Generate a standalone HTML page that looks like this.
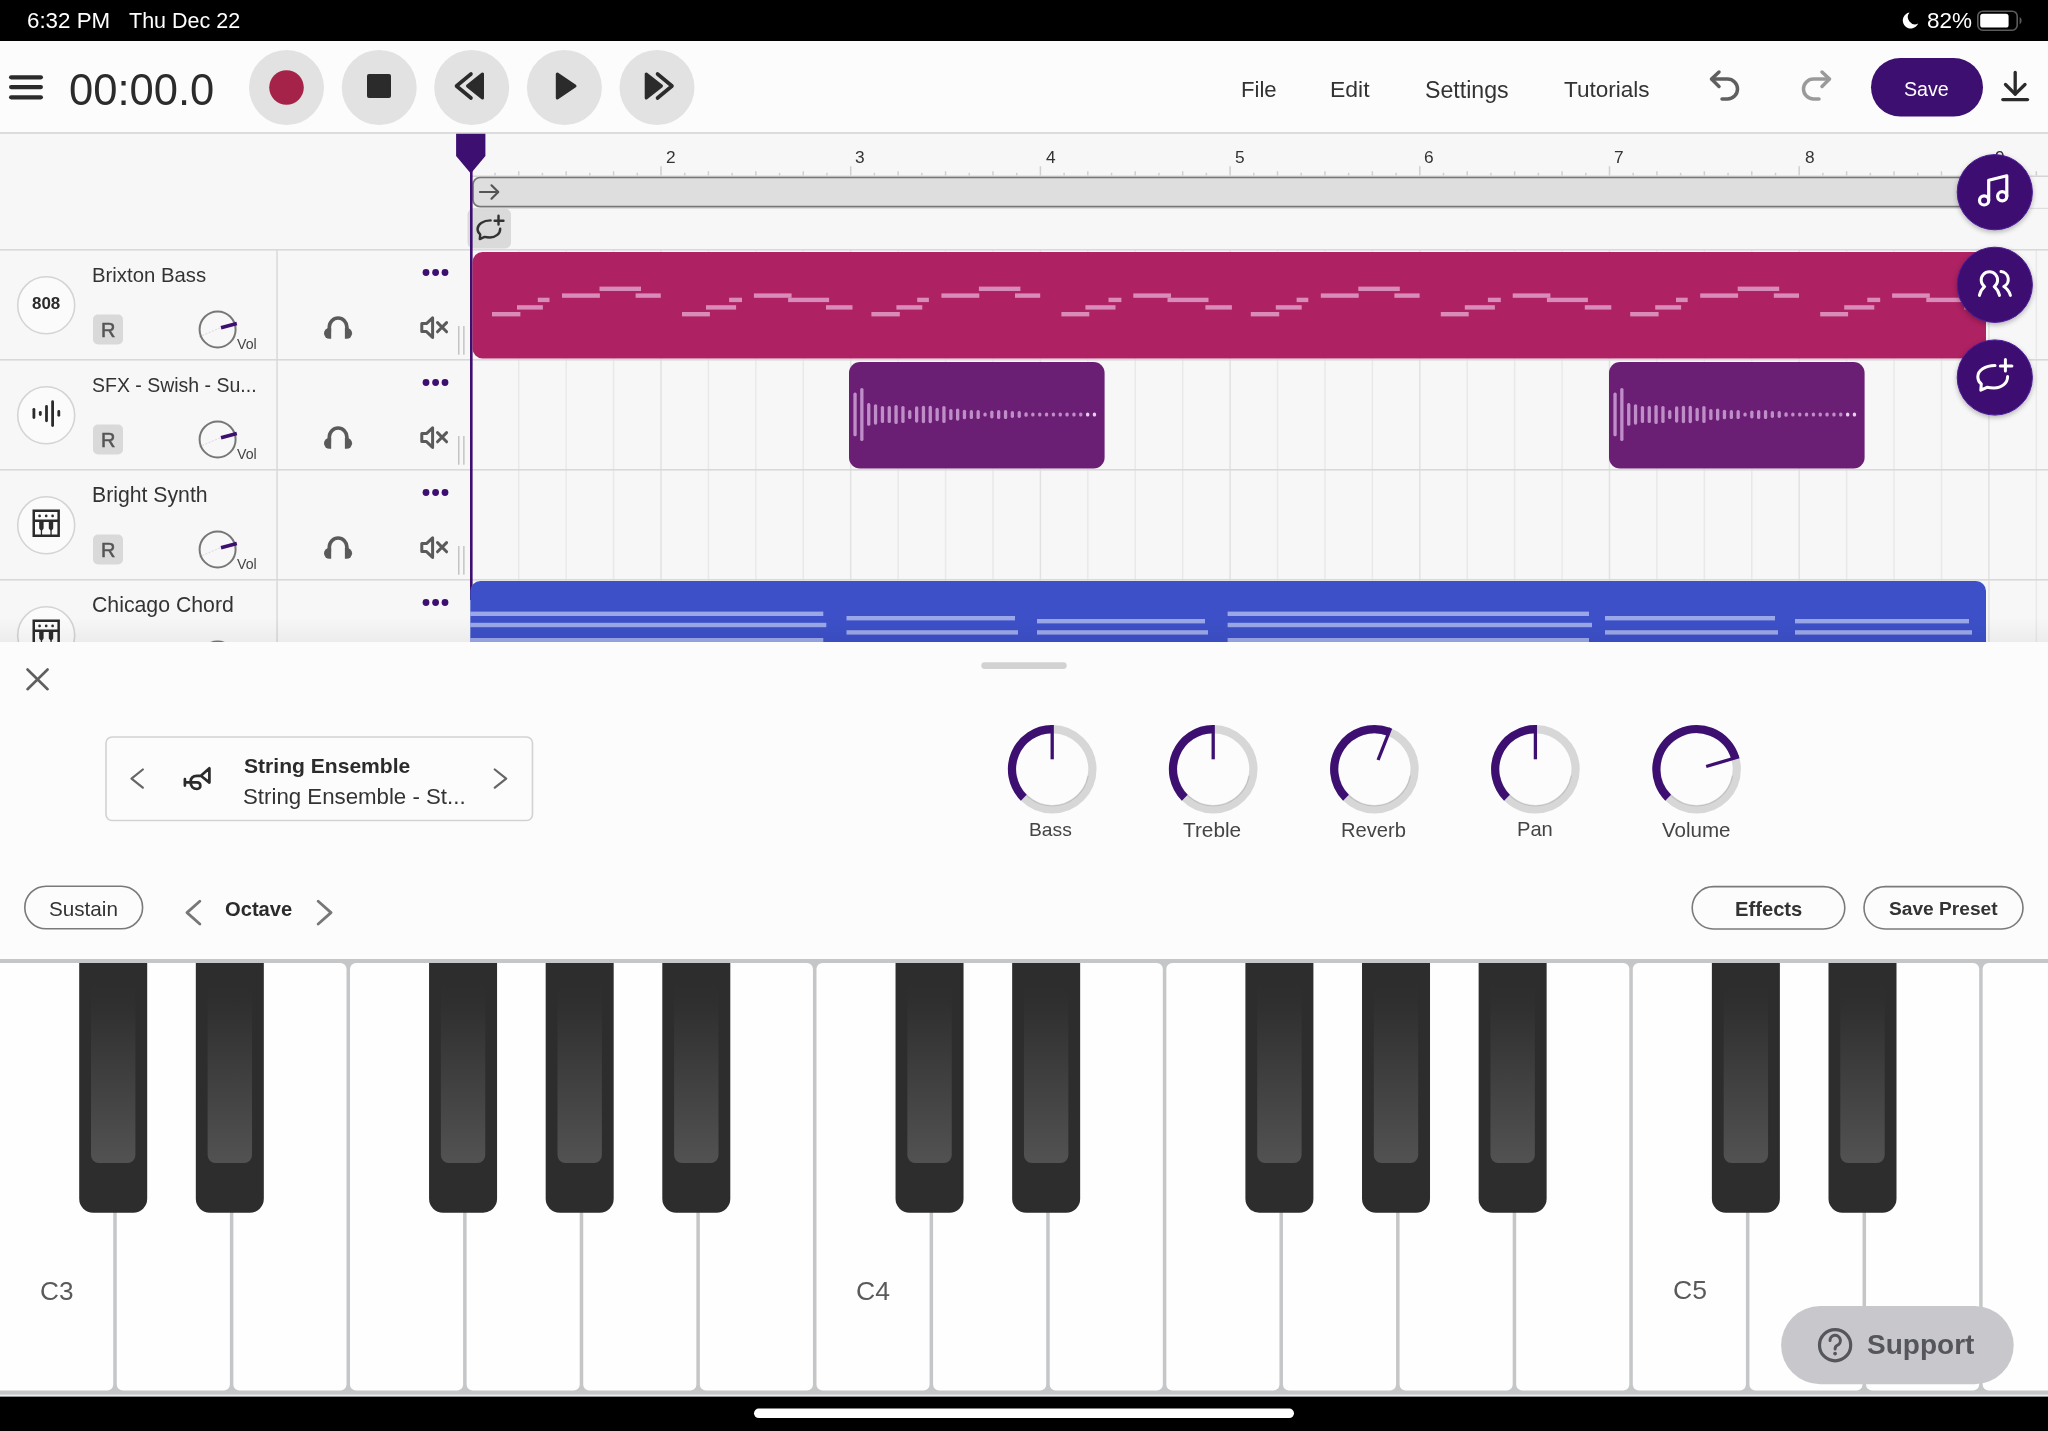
<!DOCTYPE html>
<html><head><meta charset="utf-8"><title>DAW</title>
<style>
html,body{margin:0;padding:0;}
body{width:2048px;height:1431px;overflow:hidden;position:relative;background:#fcfcfc;font-family:"Liberation Sans", sans-serif;}
.a{position:absolute;}
.t{position:absolute;line-height:1;white-space:nowrap;font-family:"Liberation Sans", sans-serif;will-change:transform;}
svg{position:absolute;left:0;top:0;overflow:visible;}
</style></head><body>

<div class="a" style="left:0;top:0;width:2048px;height:41px;background:#000"></div>
<div class="a" style="left:0;top:41px;width:2048px;height:91px;background:#fcfcfc"></div>
<div class="a" style="left:0;top:132px;width:2048px;height:2px;background:#dcdcdc"></div>
<div class="a" style="left:0;top:134px;width:2048px;height:508px;background:#f7f7f7"></div>
<div id="st_time" class="t" style="left:26.89px;top:9.69px;font-size:22.33px;color:#fff;font-weight:400;">6:32 PM</div>
<div id="st_date" class="t" style="left:128.92px;top:10.78px;font-size:21.50px;color:#fff;font-weight:400;">Thu Dec 22</div>
<div id="st_batt" class="t" style="left:1926.89px;top:9.67px;font-size:22.51px;color:#fff;font-weight:400;">82%</div>
<svg width="2048" height="41" viewBox="0 0 2048 41">
<path d="M1909.5 12.6 A8 8 0 1 0 1918.2 23.6 A7.2 7.2 0 0 1 1909.5 12.6 Z" fill="#fff"/>
<rect x="1977.8" y="11.2" width="39.4" height="19" rx="5" fill="none" stroke="#5c5c5c" stroke-width="1.6"/>
<rect x="1980.2" y="13.8" width="28.4" height="13.7" rx="2.6" fill="#fff"/>
<path d="M2019.6 17 a3 3.8 0 0 1 0 7.2 z" fill="#5c5c5c"/>
</svg>
<svg width="2048" height="140" viewBox="0 0 2048 140">
<g fill="#2b2b2b">
<rect x="9" y="75.2" width="34" height="4.2" rx="2.1"/>
<rect x="9" y="85" width="34" height="4.2" rx="2.1"/>
<rect x="9" y="95.2" width="34" height="4.2" rx="2.1"/>
</g>
<g fill="#e2e2e2">
<circle cx="286.5" cy="87.5" r="37.5"/>
<circle cx="379.2" cy="87.5" r="37.5"/>
<circle cx="471.7" cy="87.5" r="37.5"/>
<circle cx="564.4" cy="87.5" r="37.5"/>
<circle cx="657" cy="87.5" r="37.5"/>
</g>
<circle cx="286.5" cy="87.5" r="17.3" fill="#a52249"/>
<rect x="367" y="74" width="24" height="24" rx="2" fill="#2b2b2b"/>
<g fill="#2b2b2b" stroke="#2b2b2b" stroke-linejoin="round" stroke-linecap="round">
<path d="M471 74 L456.5 86 L471 98" fill="none" stroke-width="3.6"/>
<path d="M482.5 74 L482.5 98 L467.5 86 Z" stroke-width="3"/>
<path d="M557.3 74 L557.3 98 L575 86 Z" stroke-width="3"/>
<path d="M646.2 74 L646.2 98 L661.5 86 Z" stroke-width="3"/>
<path d="M657.5 74 L672 86 L657.5 98" fill="none" stroke-width="3.6"/>
</g>
<g fill="none" stroke-linecap="round" stroke-linejoin="round" stroke-width="3.5">
<path d="M1712 79 H1727.5 A10 10 0 0 1 1727.5 99 H1722" stroke="#5f5f5f"/>
<path d="M1719 72 L1711.5 79 L1719 86.5" stroke="#5f5f5f"/>
<path d="M1829 79 H1813.5 A10 10 0 0 0 1813.5 99 H1819" stroke="#9a9a9a"/>
<path d="M1822 72 L1829.5 79 L1822 86.5" stroke="#9a9a9a"/>
</g>
<rect x="1871" y="58" width="112" height="58.6" rx="29.3" fill="#3c0f71"/>
<g stroke="#2b2b2b" stroke-width="3.3" stroke-linecap="round" stroke-linejoin="round" fill="none">
<path d="M2015.2 72.5 V94"/>
<path d="M2005.5 84.5 L2015.2 94.2 L2025 84.5"/>
<path d="M2002.8 99.6 H2027.5"/>
</g>
</svg>
<div id="timer" class="t" style="left:68.77px;top:69.42px;font-size:43.54px;color:#2b2b2b;font-weight:400;">00:00.0</div>
<div id="m_file" class="t" style="left:1240.86px;top:78.74px;font-size:22.15px;color:#333;font-weight:400;">File</div>
<div id="m_edit" class="t" style="left:1329.83px;top:77.89px;font-size:22.94px;color:#333;font-weight:400;">Edit</div>
<div id="m_settings" class="t" style="left:1424.85px;top:78.53px;font-size:23.16px;color:#333;font-weight:400;">Settings</div>
<div id="m_tut" class="t" style="left:1563.88px;top:78.65px;font-size:22.53px;color:#333;font-weight:400;">Tutorials</div>
<div id="b_save" class="t" style="left:1903.99px;top:80.03px;font-size:19.66px;color:#fff;font-weight:400;">Save</div>
<svg width="2048" height="660" viewBox="0 0 2048 660">
<rect x="517.98" y="250" width="1.5" height="392" fill="#e9e9e9"/>
<rect x="565.40" y="250" width="1.5" height="392" fill="#e9e9e9"/>
<rect x="612.83" y="250" width="1.5" height="392" fill="#e9e9e9"/>
<rect x="660.25" y="250" width="1.5" height="392" fill="#e2e2e2"/>
<rect x="707.67" y="250" width="1.5" height="392" fill="#e9e9e9"/>
<rect x="755.10" y="250" width="1.5" height="392" fill="#e9e9e9"/>
<rect x="802.52" y="250" width="1.5" height="392" fill="#e9e9e9"/>
<rect x="849.95" y="250" width="1.5" height="392" fill="#e2e2e2"/>
<rect x="897.38" y="250" width="1.5" height="392" fill="#e9e9e9"/>
<rect x="944.80" y="250" width="1.5" height="392" fill="#e9e9e9"/>
<rect x="992.22" y="250" width="1.5" height="392" fill="#e9e9e9"/>
<rect x="1039.65" y="250" width="1.5" height="392" fill="#e2e2e2"/>
<rect x="1087.08" y="250" width="1.5" height="392" fill="#e9e9e9"/>
<rect x="1134.50" y="250" width="1.5" height="392" fill="#e9e9e9"/>
<rect x="1181.92" y="250" width="1.5" height="392" fill="#e9e9e9"/>
<rect x="1229.35" y="250" width="1.5" height="392" fill="#e2e2e2"/>
<rect x="1276.77" y="250" width="1.5" height="392" fill="#e9e9e9"/>
<rect x="1324.20" y="250" width="1.5" height="392" fill="#e9e9e9"/>
<rect x="1371.62" y="250" width="1.5" height="392" fill="#e9e9e9"/>
<rect x="1419.05" y="250" width="1.5" height="392" fill="#e2e2e2"/>
<rect x="1466.47" y="250" width="1.5" height="392" fill="#e9e9e9"/>
<rect x="1513.90" y="250" width="1.5" height="392" fill="#e9e9e9"/>
<rect x="1561.32" y="250" width="1.5" height="392" fill="#e9e9e9"/>
<rect x="1608.75" y="250" width="1.5" height="392" fill="#e2e2e2"/>
<rect x="1656.17" y="250" width="1.5" height="392" fill="#e9e9e9"/>
<rect x="1703.60" y="250" width="1.5" height="392" fill="#e9e9e9"/>
<rect x="1751.02" y="250" width="1.5" height="392" fill="#e9e9e9"/>
<rect x="1798.45" y="250" width="1.5" height="392" fill="#e2e2e2"/>
<rect x="1845.87" y="250" width="1.5" height="392" fill="#e9e9e9"/>
<rect x="1893.30" y="250" width="1.5" height="392" fill="#e9e9e9"/>
<rect x="1940.72" y="250" width="1.5" height="392" fill="#e9e9e9"/>
<rect x="1988.15" y="250" width="1.5" height="392" fill="#e2e2e2"/>
<rect x="2035.57" y="250" width="1.5" height="392" fill="#e9e9e9"/>
<rect x="494.26" y="172.8" width="1.5" height="2.7" fill="#d0d0d0"/>
<rect x="517.98" y="171.2" width="1.5" height="4.3" fill="#d0d0d0"/>
<rect x="541.69" y="172.8" width="1.5" height="2.7" fill="#d0d0d0"/>
<rect x="565.40" y="171.2" width="1.5" height="4.3" fill="#d0d0d0"/>
<rect x="589.11" y="172.8" width="1.5" height="2.7" fill="#d0d0d0"/>
<rect x="612.83" y="171.2" width="1.5" height="4.3" fill="#d0d0d0"/>
<rect x="636.54" y="172.8" width="1.5" height="2.7" fill="#d0d0d0"/>
<rect x="660.25" y="166.2" width="1.5" height="9.3" fill="#d0d0d0"/>
<rect x="683.96" y="172.8" width="1.5" height="2.7" fill="#d0d0d0"/>
<rect x="707.67" y="171.2" width="1.5" height="4.3" fill="#d0d0d0"/>
<rect x="731.39" y="172.8" width="1.5" height="2.7" fill="#d0d0d0"/>
<rect x="755.10" y="171.2" width="1.5" height="4.3" fill="#d0d0d0"/>
<rect x="778.81" y="172.8" width="1.5" height="2.7" fill="#d0d0d0"/>
<rect x="802.52" y="171.2" width="1.5" height="4.3" fill="#d0d0d0"/>
<rect x="826.24" y="172.8" width="1.5" height="2.7" fill="#d0d0d0"/>
<rect x="849.95" y="166.2" width="1.5" height="9.3" fill="#d0d0d0"/>
<rect x="873.66" y="172.8" width="1.5" height="2.7" fill="#d0d0d0"/>
<rect x="897.38" y="171.2" width="1.5" height="4.3" fill="#d0d0d0"/>
<rect x="921.09" y="172.8" width="1.5" height="2.7" fill="#d0d0d0"/>
<rect x="944.80" y="171.2" width="1.5" height="4.3" fill="#d0d0d0"/>
<rect x="968.51" y="172.8" width="1.5" height="2.7" fill="#d0d0d0"/>
<rect x="992.22" y="171.2" width="1.5" height="4.3" fill="#d0d0d0"/>
<rect x="1015.94" y="172.8" width="1.5" height="2.7" fill="#d0d0d0"/>
<rect x="1039.65" y="166.2" width="1.5" height="9.3" fill="#d0d0d0"/>
<rect x="1063.36" y="172.8" width="1.5" height="2.7" fill="#d0d0d0"/>
<rect x="1087.08" y="171.2" width="1.5" height="4.3" fill="#d0d0d0"/>
<rect x="1110.79" y="172.8" width="1.5" height="2.7" fill="#d0d0d0"/>
<rect x="1134.50" y="171.2" width="1.5" height="4.3" fill="#d0d0d0"/>
<rect x="1158.21" y="172.8" width="1.5" height="2.7" fill="#d0d0d0"/>
<rect x="1181.92" y="171.2" width="1.5" height="4.3" fill="#d0d0d0"/>
<rect x="1205.64" y="172.8" width="1.5" height="2.7" fill="#d0d0d0"/>
<rect x="1229.35" y="166.2" width="1.5" height="9.3" fill="#d0d0d0"/>
<rect x="1253.06" y="172.8" width="1.5" height="2.7" fill="#d0d0d0"/>
<rect x="1276.77" y="171.2" width="1.5" height="4.3" fill="#d0d0d0"/>
<rect x="1300.49" y="172.8" width="1.5" height="2.7" fill="#d0d0d0"/>
<rect x="1324.20" y="171.2" width="1.5" height="4.3" fill="#d0d0d0"/>
<rect x="1347.91" y="172.8" width="1.5" height="2.7" fill="#d0d0d0"/>
<rect x="1371.62" y="171.2" width="1.5" height="4.3" fill="#d0d0d0"/>
<rect x="1395.34" y="172.8" width="1.5" height="2.7" fill="#d0d0d0"/>
<rect x="1419.05" y="166.2" width="1.5" height="9.3" fill="#d0d0d0"/>
<rect x="1442.76" y="172.8" width="1.5" height="2.7" fill="#d0d0d0"/>
<rect x="1466.47" y="171.2" width="1.5" height="4.3" fill="#d0d0d0"/>
<rect x="1490.19" y="172.8" width="1.5" height="2.7" fill="#d0d0d0"/>
<rect x="1513.90" y="171.2" width="1.5" height="4.3" fill="#d0d0d0"/>
<rect x="1537.61" y="172.8" width="1.5" height="2.7" fill="#d0d0d0"/>
<rect x="1561.32" y="171.2" width="1.5" height="4.3" fill="#d0d0d0"/>
<rect x="1585.04" y="172.8" width="1.5" height="2.7" fill="#d0d0d0"/>
<rect x="1608.75" y="166.2" width="1.5" height="9.3" fill="#d0d0d0"/>
<rect x="1632.46" y="172.8" width="1.5" height="2.7" fill="#d0d0d0"/>
<rect x="1656.17" y="171.2" width="1.5" height="4.3" fill="#d0d0d0"/>
<rect x="1679.89" y="172.8" width="1.5" height="2.7" fill="#d0d0d0"/>
<rect x="1703.60" y="171.2" width="1.5" height="4.3" fill="#d0d0d0"/>
<rect x="1727.31" y="172.8" width="1.5" height="2.7" fill="#d0d0d0"/>
<rect x="1751.02" y="171.2" width="1.5" height="4.3" fill="#d0d0d0"/>
<rect x="1774.74" y="172.8" width="1.5" height="2.7" fill="#d0d0d0"/>
<rect x="1798.45" y="166.2" width="1.5" height="9.3" fill="#d0d0d0"/>
<rect x="1822.16" y="172.8" width="1.5" height="2.7" fill="#d0d0d0"/>
<rect x="1845.87" y="171.2" width="1.5" height="4.3" fill="#d0d0d0"/>
<rect x="1869.59" y="172.8" width="1.5" height="2.7" fill="#d0d0d0"/>
<rect x="1893.30" y="171.2" width="1.5" height="4.3" fill="#d0d0d0"/>
<rect x="1917.01" y="172.8" width="1.5" height="2.7" fill="#d0d0d0"/>
<rect x="1940.72" y="171.2" width="1.5" height="4.3" fill="#d0d0d0"/>
<rect x="1964.44" y="172.8" width="1.5" height="2.7" fill="#d0d0d0"/>
<rect x="1988.15" y="166.2" width="1.5" height="9.3" fill="#d0d0d0"/>
<rect x="2011.86" y="172.8" width="1.5" height="2.7" fill="#d0d0d0"/>
<rect x="2035.57" y="171.2" width="1.5" height="4.3" fill="#d0d0d0"/>
<rect x="0" y="249" width="2048" height="1.6" fill="#dadada"/>
<rect x="0" y="359" width="2048" height="1.6" fill="#d9d9d9"/>
<rect x="0" y="469" width="2048" height="1.6" fill="#d9d9d9"/>
<rect x="0" y="579" width="2048" height="1.6" fill="#d9d9d9"/>
<rect x="276.3" y="250" width="1.5" height="392" fill="#d9d9d9"/>
<rect x="472" y="175.6" width="1576" height="1.2" fill="#cdcdcd"/>
<rect x="472" y="207.8" width="1576" height="1.2" fill="#dedede"/>
<path d="M480 177.5 H1995 V206.7 H480 A7 7 0 0 1 473 199.7 V184.5 A7 7 0 0 1 480 177.5 Z" fill="#dedede" stroke="#777" stroke-width="1.7"/>
<path d="M480 192 H498 M491.5 185.3 L498.3 192 L491.5 198.7" fill="none" stroke="#555" stroke-width="2.2" stroke-linecap="round" stroke-linejoin="round"/>
<rect x="467.5" y="208.6" width="43.5" height="39.8" rx="6" fill="#dadada"/>
<g transform="translate(490.5 227.4) scale(0.76) translate(-1994.85 -374.8)"><path d="M1995 365.6 C1985 365.6 1977.8 370.5 1977.8 377 C1977.8 380 1979.3 382.4 1981.3 384 L1980.8 390.2 L1987 387.3 C1989 387.8 1991.5 388 1994 388 C2002 388 2007.6 383 2007.6 376.5 M2000.3 366.1 H2011.9 M2005.4 359.4 V371" fill="none" stroke="#333" stroke-width="3.2" stroke-linecap="round" stroke-linejoin="round"/></g>
<rect x="470" y="160" width="2.6" height="440" fill="#3c0f71"/>
<path d="M482.5 252 H1986 V358.5 H482.5 A10 10 0 0 1 472.5 348.5 V262 A10 10 0 0 1 482.5 252 Z" fill="#ae2163"/>
<rect x="492.0" y="312.0" width="28.4" height="4.4" fill="#d98cba"/>
<rect x="517.0" y="305.2" width="25.9" height="4.4" fill="#d98cba"/>
<rect x="537.8" y="297.7" width="11.7" height="4.4" fill="#d98cba"/>
<rect x="562.0" y="293.4" width="37.9" height="4.4" fill="#d98cba"/>
<rect x="599.5" y="286.6" width="41.5" height="4.4" fill="#d98cba"/>
<rect x="635.6" y="293.4" width="25.2" height="4.4" fill="#d98cba"/>
<rect x="682.0" y="312.0" width="27.9" height="4.4" fill="#d98cba"/>
<rect x="706.0" y="305.2" width="30.1" height="4.4" fill="#d98cba"/>
<rect x="729.1" y="297.7" width="12.9" height="4.4" fill="#d98cba"/>
<rect x="753.9" y="293.4" width="37.7" height="4.4" fill="#d98cba"/>
<rect x="788.1" y="297.7" width="41.0" height="4.4" fill="#d98cba"/>
<rect x="826.0" y="305.2" width="26.5" height="4.4" fill="#d98cba"/>
<rect x="871.4" y="312.0" width="28.4" height="4.4" fill="#d98cba"/>
<rect x="896.4" y="305.2" width="25.9" height="4.4" fill="#d98cba"/>
<rect x="917.2" y="297.7" width="11.7" height="4.4" fill="#d98cba"/>
<rect x="941.4" y="293.4" width="37.9" height="4.4" fill="#d98cba"/>
<rect x="978.9" y="286.6" width="41.5" height="4.4" fill="#d98cba"/>
<rect x="1015.0" y="293.4" width="25.2" height="4.4" fill="#d98cba"/>
<rect x="1061.4" y="312.0" width="27.9" height="4.4" fill="#d98cba"/>
<rect x="1085.4" y="305.2" width="30.1" height="4.4" fill="#d98cba"/>
<rect x="1108.5" y="297.7" width="12.9" height="4.4" fill="#d98cba"/>
<rect x="1133.3" y="293.4" width="37.7" height="4.4" fill="#d98cba"/>
<rect x="1167.5" y="297.7" width="41.0" height="4.4" fill="#d98cba"/>
<rect x="1205.4" y="305.2" width="26.5" height="4.4" fill="#d98cba"/>
<rect x="1250.8" y="312.0" width="28.4" height="4.4" fill="#d98cba"/>
<rect x="1275.8" y="305.2" width="25.9" height="4.4" fill="#d98cba"/>
<rect x="1296.6" y="297.7" width="11.7" height="4.4" fill="#d98cba"/>
<rect x="1320.8" y="293.4" width="37.9" height="4.4" fill="#d98cba"/>
<rect x="1358.3" y="286.6" width="41.5" height="4.4" fill="#d98cba"/>
<rect x="1394.4" y="293.4" width="25.2" height="4.4" fill="#d98cba"/>
<rect x="1440.8" y="312.0" width="27.9" height="4.4" fill="#d98cba"/>
<rect x="1464.8" y="305.2" width="30.1" height="4.4" fill="#d98cba"/>
<rect x="1487.9" y="297.7" width="12.9" height="4.4" fill="#d98cba"/>
<rect x="1512.7" y="293.4" width="37.7" height="4.4" fill="#d98cba"/>
<rect x="1546.9" y="297.7" width="41.0" height="4.4" fill="#d98cba"/>
<rect x="1584.8" y="305.2" width="26.5" height="4.4" fill="#d98cba"/>
<rect x="1630.2" y="312.0" width="28.4" height="4.4" fill="#d98cba"/>
<rect x="1655.2" y="305.2" width="25.9" height="4.4" fill="#d98cba"/>
<rect x="1676.0" y="297.7" width="11.7" height="4.4" fill="#d98cba"/>
<rect x="1700.2" y="293.4" width="37.9" height="4.4" fill="#d98cba"/>
<rect x="1737.7" y="286.6" width="41.5" height="4.4" fill="#d98cba"/>
<rect x="1773.8" y="293.4" width="25.2" height="4.4" fill="#d98cba"/>
<rect x="1820.2" y="312.0" width="27.9" height="4.4" fill="#d98cba"/>
<rect x="1844.2" y="305.2" width="30.1" height="4.4" fill="#d98cba"/>
<rect x="1867.3" y="297.7" width="12.9" height="4.4" fill="#d98cba"/>
<rect x="1892.1" y="293.4" width="37.7" height="4.4" fill="#d98cba"/>
<rect x="1926.3" y="297.7" width="41.0" height="4.4" fill="#d98cba"/>
<rect x="1964.2" y="305.2" width="21.8" height="4.4" fill="#d98cba"/>
<rect x="849.0" y="362" width="255.6" height="106.5" rx="11" fill="#6b1f74"/>
<rect x="853.4" y="392.6" width="3.3" height="43.7" rx="1.6" fill="#bf8ec8"/>
<rect x="860.2" y="388.0" width="3.3" height="53.0" rx="1.6" fill="#bf8ec8"/>
<rect x="867.1" y="403.1" width="3.3" height="22.7" rx="1.6" fill="#bf8ec8"/>
<rect x="873.9" y="404.2" width="3.3" height="20.5" rx="1.6" fill="#bf8ec8"/>
<rect x="880.8" y="406.0" width="3.3" height="17.0" rx="1.6" fill="#bf8ec8"/>
<rect x="887.6" y="406.0" width="3.3" height="17.0" rx="1.6" fill="#bf8ec8"/>
<rect x="894.4" y="405.0" width="3.3" height="19.0" rx="1.6" fill="#bf8ec8"/>
<rect x="901.3" y="406.0" width="3.3" height="17.0" rx="1.6" fill="#bf8ec8"/>
<rect x="908.1" y="410.1" width="3.3" height="8.9" rx="1.6" fill="#bf8ec8"/>
<rect x="915.0" y="406.3" width="3.3" height="16.4" rx="1.6" fill="#bf8ec8"/>
<rect x="921.8" y="405.8" width="3.3" height="17.4" rx="1.6" fill="#bf8ec8"/>
<rect x="928.6" y="405.8" width="3.3" height="17.4" rx="1.6" fill="#bf8ec8"/>
<rect x="935.5" y="407.8" width="3.3" height="13.4" rx="1.6" fill="#bf8ec8"/>
<rect x="942.3" y="406.0" width="3.3" height="17.0" rx="1.6" fill="#bf8ec8"/>
<rect x="949.2" y="409.0" width="3.3" height="11.0" rx="1.6" fill="#bf8ec8"/>
<rect x="956.0" y="408.4" width="3.3" height="12.3" rx="1.6" fill="#bf8ec8"/>
<rect x="962.8" y="409.7" width="3.3" height="9.6" rx="1.6" fill="#bf8ec8"/>
<rect x="969.7" y="410.1" width="3.3" height="8.9" rx="1.6" fill="#bf8ec8"/>
<rect x="976.5" y="410.1" width="3.3" height="8.9" rx="1.6" fill="#bf8ec8"/>
<rect x="983.4" y="412.5" width="3.3" height="4.0" rx="1.6" fill="#bf8ec8"/>
<rect x="990.2" y="410.6" width="3.3" height="7.8" rx="1.6" fill="#bf8ec8"/>
<rect x="997.0" y="410.1" width="3.3" height="8.9" rx="1.6" fill="#bf8ec8"/>
<rect x="1003.9" y="410.1" width="3.3" height="8.9" rx="1.6" fill="#bf8ec8"/>
<rect x="1010.7" y="411.1" width="3.3" height="6.8" rx="1.6" fill="#bf8ec8"/>
<rect x="1017.6" y="411.1" width="3.3" height="6.8" rx="1.6" fill="#bf8ec8"/>
<rect x="1024.4" y="412.2" width="3.3" height="4.6" rx="1.6" fill="#bf8ec8"/>
<rect x="1031.2" y="412.5" width="3.3" height="4.0" rx="1.6" fill="#bf8ec8"/>
<rect x="1038.1" y="412.5" width="3.3" height="4.0" rx="1.6" fill="#bf8ec8"/>
<rect x="1044.9" y="412.5" width="3.3" height="4.0" rx="1.6" fill="#bf8ec8"/>
<rect x="1051.8" y="412.5" width="3.3" height="4.0" rx="1.6" fill="#bf8ec8"/>
<rect x="1058.6" y="412.5" width="3.3" height="4.0" rx="1.6" fill="#bf8ec8"/>
<rect x="1065.4" y="412.5" width="3.3" height="4.0" rx="1.6" fill="#bf8ec8"/>
<rect x="1072.3" y="412.5" width="3.3" height="4.0" rx="1.6" fill="#bf8ec8"/>
<rect x="1079.1" y="412.5" width="3.3" height="4.0" rx="1.6" fill="#bf8ec8"/>
<rect x="1086.0" y="412.5" width="3.3" height="4.0" rx="1.6" fill="#e6d0ea"/>
<rect x="1092.8" y="412.5" width="3.3" height="4.0" rx="1.6" fill="#e6d0ea"/>
<rect x="1609.0" y="362" width="255.6" height="106.5" rx="11" fill="#6b1f74"/>
<rect x="1613.4" y="392.6" width="3.3" height="43.7" rx="1.6" fill="#bf8ec8"/>
<rect x="1620.2" y="388.0" width="3.3" height="53.0" rx="1.6" fill="#bf8ec8"/>
<rect x="1627.1" y="403.1" width="3.3" height="22.7" rx="1.6" fill="#bf8ec8"/>
<rect x="1633.9" y="404.2" width="3.3" height="20.5" rx="1.6" fill="#bf8ec8"/>
<rect x="1640.8" y="406.0" width="3.3" height="17.0" rx="1.6" fill="#bf8ec8"/>
<rect x="1647.6" y="406.0" width="3.3" height="17.0" rx="1.6" fill="#bf8ec8"/>
<rect x="1654.4" y="405.0" width="3.3" height="19.0" rx="1.6" fill="#bf8ec8"/>
<rect x="1661.3" y="406.0" width="3.3" height="17.0" rx="1.6" fill="#bf8ec8"/>
<rect x="1668.1" y="410.1" width="3.3" height="8.9" rx="1.6" fill="#bf8ec8"/>
<rect x="1675.0" y="406.3" width="3.3" height="16.4" rx="1.6" fill="#bf8ec8"/>
<rect x="1681.8" y="405.8" width="3.3" height="17.4" rx="1.6" fill="#bf8ec8"/>
<rect x="1688.6" y="405.8" width="3.3" height="17.4" rx="1.6" fill="#bf8ec8"/>
<rect x="1695.5" y="407.8" width="3.3" height="13.4" rx="1.6" fill="#bf8ec8"/>
<rect x="1702.3" y="406.0" width="3.3" height="17.0" rx="1.6" fill="#bf8ec8"/>
<rect x="1709.2" y="409.0" width="3.3" height="11.0" rx="1.6" fill="#bf8ec8"/>
<rect x="1716.0" y="408.4" width="3.3" height="12.3" rx="1.6" fill="#bf8ec8"/>
<rect x="1722.8" y="409.7" width="3.3" height="9.6" rx="1.6" fill="#bf8ec8"/>
<rect x="1729.7" y="410.1" width="3.3" height="8.9" rx="1.6" fill="#bf8ec8"/>
<rect x="1736.5" y="410.1" width="3.3" height="8.9" rx="1.6" fill="#bf8ec8"/>
<rect x="1743.4" y="412.5" width="3.3" height="4.0" rx="1.6" fill="#bf8ec8"/>
<rect x="1750.2" y="410.6" width="3.3" height="7.8" rx="1.6" fill="#bf8ec8"/>
<rect x="1757.0" y="410.1" width="3.3" height="8.9" rx="1.6" fill="#bf8ec8"/>
<rect x="1763.9" y="410.1" width="3.3" height="8.9" rx="1.6" fill="#bf8ec8"/>
<rect x="1770.7" y="411.1" width="3.3" height="6.8" rx="1.6" fill="#bf8ec8"/>
<rect x="1777.6" y="411.1" width="3.3" height="6.8" rx="1.6" fill="#bf8ec8"/>
<rect x="1784.4" y="412.2" width="3.3" height="4.6" rx="1.6" fill="#bf8ec8"/>
<rect x="1791.2" y="412.5" width="3.3" height="4.0" rx="1.6" fill="#bf8ec8"/>
<rect x="1798.1" y="412.5" width="3.3" height="4.0" rx="1.6" fill="#bf8ec8"/>
<rect x="1804.9" y="412.5" width="3.3" height="4.0" rx="1.6" fill="#bf8ec8"/>
<rect x="1811.8" y="412.5" width="3.3" height="4.0" rx="1.6" fill="#bf8ec8"/>
<rect x="1818.6" y="412.5" width="3.3" height="4.0" rx="1.6" fill="#bf8ec8"/>
<rect x="1825.4" y="412.5" width="3.3" height="4.0" rx="1.6" fill="#bf8ec8"/>
<rect x="1832.3" y="412.5" width="3.3" height="4.0" rx="1.6" fill="#bf8ec8"/>
<rect x="1839.1" y="412.5" width="3.3" height="4.0" rx="1.6" fill="#bf8ec8"/>
<rect x="1846.0" y="412.5" width="3.3" height="4.0" rx="1.6" fill="#e6d0ea"/>
<rect x="1852.8" y="412.5" width="3.3" height="4.0" rx="1.6" fill="#e6d0ea"/>
<path d="M480.3 581 H1976 A10 10 0 0 1 1986 591 V650 H470.3 V591 A10 10 0 0 1 480.3 581 Z" fill="#3d50c8"/>
<rect x="470" y="611.6" width="353.3" height="4.4" fill="#9ba8e8"/>
<rect x="470" y="622.8" width="356.3" height="4.4" fill="#9ba8e8"/>
<rect x="470" y="638.0" width="353.3" height="4.4" fill="#9ba8e8"/>
<rect x="846.5" y="616.0" width="168.5" height="4.4" fill="#9ba8e8"/>
<rect x="846.5" y="630.2" width="171.5" height="4.4" fill="#9ba8e8"/>
<rect x="1037" y="619.0" width="168.0" height="4.4" fill="#9ba8e8"/>
<rect x="1037" y="630.2" width="171.0" height="4.4" fill="#9ba8e8"/>
<rect x="1227.6" y="611.6" width="361.4" height="4.4" fill="#9ba8e8"/>
<rect x="1227.6" y="622.8" width="364.4" height="4.4" fill="#9ba8e8"/>
<rect x="1227.6" y="638.0" width="361.4" height="4.4" fill="#9ba8e8"/>
<rect x="1605" y="616.0" width="170.0" height="4.4" fill="#9ba8e8"/>
<rect x="1605" y="630.2" width="173.0" height="4.4" fill="#9ba8e8"/>
<rect x="1795" y="619.0" width="174.0" height="4.4" fill="#9ba8e8"/>
<rect x="1795" y="630.2" width="177.0" height="4.4" fill="#9ba8e8"/>
<path d="M456.1 133.8 H485.4 V156 L470.8 173.5 L456.1 156 Z" fill="#3c0f71"/>
</svg>
<div id="rl_2" class="t" style="left:665.62px;top:149.32px;font-size:17.30px;color:#333;font-weight:400;">2</div>
<div id="rl_3" class="t" style="left:855.29px;top:149.31px;font-size:17.30px;color:#333;font-weight:400;">3</div>
<div id="rl_4" class="t" style="left:1045.90px;top:148.52px;font-size:17.30px;color:#333;font-weight:400;">4</div>
<div id="rl_5" class="t" style="left:1234.53px;top:149.31px;font-size:17.30px;color:#333;font-weight:400;">5</div>
<div id="rl_6" class="t" style="left:1424.07px;top:149.31px;font-size:17.30px;color:#333;font-weight:400;">6</div>
<div id="rl_7" class="t" style="left:1613.62px;top:149.32px;font-size:17.30px;color:#333;font-weight:400;">7</div>
<div id="rl_8" class="t" style="left:1805.29px;top:149.31px;font-size:17.30px;color:#333;font-weight:400;">8</div>
<div id="rl_9" class="t" style="left:1994.89px;top:149.31px;font-size:17.30px;color:#333;font-weight:400;">9</div>
<svg width="480" height="660" viewBox="0 0 480 660">
<circle cx="46.2" cy="305.3" r="28.5" fill="#fbfbfb" stroke="#d4d4d4" stroke-width="1.6"/>
<circle cx="426" cy="272.5" r="3.4" fill="#3c0f71"/>
<circle cx="435.6" cy="272.5" r="3.4" fill="#3c0f71"/>
<circle cx="445" cy="272.5" r="3.4" fill="#3c0f71"/>
<rect x="93" y="314.5" width="30" height="30" rx="5" fill="#d9d9d9"/>
<line x1="199" y1="336.9" x2="220" y2="327.9" stroke="#d9d3e6" stroke-width="1" stroke-dasharray="2 1.5"/>
<circle cx="217.6" cy="329.4" r="18" fill="none" stroke="#777" stroke-width="2"/>
<line x1="221" y1="327.7" x2="236.8" y2="323.59999999999997" stroke="#3c0f71" stroke-width="3.6" stroke-linecap="butt"/>
<g transform="translate(0 0.0)"><path d="M329.3 332 V327 A8.8 9 0 0 1 346.9 327 V332" fill="none" stroke="#5a5a5a" stroke-width="3.6"/><path d="M331.2 327.8 V338.8 H329.5 A5.5 5.5 0 0 1 329.5 327.8 Z" fill="#5a5a5a"/><path d="M344.9 327.8 V338.8 H346.6 A5.5 5.5 0 0 0 346.6 327.8 Z" fill="#5a5a5a"/></g>
<g transform="translate(0 0.0)"><path d="M421.8 323.6 H426.5 L432.6 317.8 V337.4 L426.5 331.6 H421.8 Z" fill="none" stroke="#5a5a5a" stroke-width="3" stroke-linejoin="round"/><path d="M437.5 322.6 L446.6 331.8 M446.6 322.6 L437.5 331.8" stroke="#5a5a5a" stroke-width="3" stroke-linecap="round"/></g>
<rect x="458" y="326" width="1.5" height="28.7" fill="#c4c4c4"/><rect x="463.1" y="326" width="1.5" height="28.7" fill="#c4c4c4"/>
<circle cx="46.2" cy="415.3" r="28.5" fill="#fbfbfb" stroke="#d4d4d4" stroke-width="1.6"/>
<circle cx="426" cy="382.5" r="3.4" fill="#3c0f71"/>
<circle cx="435.6" cy="382.5" r="3.4" fill="#3c0f71"/>
<circle cx="445" cy="382.5" r="3.4" fill="#3c0f71"/>
<rect x="93" y="424.5" width="30" height="30" rx="5" fill="#d9d9d9"/>
<line x1="199" y1="446.9" x2="220" y2="437.9" stroke="#d9d3e6" stroke-width="1" stroke-dasharray="2 1.5"/>
<circle cx="217.6" cy="439.4" r="18" fill="none" stroke="#777" stroke-width="2"/>
<line x1="221" y1="437.7" x2="236.8" y2="433.59999999999997" stroke="#3c0f71" stroke-width="3.6" stroke-linecap="butt"/>
<g transform="translate(0 110.0)"><path d="M329.3 332 V327 A8.8 9 0 0 1 346.9 327 V332" fill="none" stroke="#5a5a5a" stroke-width="3.6"/><path d="M331.2 327.8 V338.8 H329.5 A5.5 5.5 0 0 1 329.5 327.8 Z" fill="#5a5a5a"/><path d="M344.9 327.8 V338.8 H346.6 A5.5 5.5 0 0 0 346.6 327.8 Z" fill="#5a5a5a"/></g>
<g transform="translate(0 110.0)"><path d="M421.8 323.6 H426.5 L432.6 317.8 V337.4 L426.5 331.6 H421.8 Z" fill="none" stroke="#5a5a5a" stroke-width="3" stroke-linejoin="round"/><path d="M437.5 322.6 L446.6 331.8 M446.6 322.6 L437.5 331.8" stroke="#5a5a5a" stroke-width="3" stroke-linecap="round"/></g>
<rect x="458" y="436" width="1.5" height="28.7" fill="#c4c4c4"/><rect x="463.1" y="436" width="1.5" height="28.7" fill="#c4c4c4"/>
<circle cx="46.2" cy="525.3" r="28.5" fill="#fbfbfb" stroke="#d4d4d4" stroke-width="1.6"/>
<circle cx="426" cy="492.5" r="3.4" fill="#3c0f71"/>
<circle cx="435.6" cy="492.5" r="3.4" fill="#3c0f71"/>
<circle cx="445" cy="492.5" r="3.4" fill="#3c0f71"/>
<rect x="93" y="534.5" width="30" height="30" rx="5" fill="#d9d9d9"/>
<line x1="199" y1="556.9" x2="220" y2="547.9" stroke="#d9d3e6" stroke-width="1" stroke-dasharray="2 1.5"/>
<circle cx="217.6" cy="549.4" r="18" fill="none" stroke="#777" stroke-width="2"/>
<line x1="221" y1="547.6999999999999" x2="236.8" y2="543.6" stroke="#3c0f71" stroke-width="3.6" stroke-linecap="butt"/>
<g transform="translate(0 219.99999999999994)"><path d="M329.3 332 V327 A8.8 9 0 0 1 346.9 327 V332" fill="none" stroke="#5a5a5a" stroke-width="3.6"/><path d="M331.2 327.8 V338.8 H329.5 A5.5 5.5 0 0 1 329.5 327.8 Z" fill="#5a5a5a"/><path d="M344.9 327.8 V338.8 H346.6 A5.5 5.5 0 0 0 346.6 327.8 Z" fill="#5a5a5a"/></g>
<g transform="translate(0 219.99999999999994)"><path d="M421.8 323.6 H426.5 L432.6 317.8 V337.4 L426.5 331.6 H421.8 Z" fill="none" stroke="#5a5a5a" stroke-width="3" stroke-linejoin="round"/><path d="M437.5 322.6 L446.6 331.8 M446.6 322.6 L437.5 331.8" stroke="#5a5a5a" stroke-width="3" stroke-linecap="round"/></g>
<rect x="458" y="546" width="1.5" height="28.7" fill="#c4c4c4"/><rect x="463.1" y="546" width="1.5" height="28.7" fill="#c4c4c4"/>
<circle cx="46.2" cy="635.3" r="28.5" fill="#fbfbfb" stroke="#d4d4d4" stroke-width="1.6"/>
<circle cx="426" cy="602.5" r="3.4" fill="#3c0f71"/>
<circle cx="435.6" cy="602.5" r="3.4" fill="#3c0f71"/>
<circle cx="445" cy="602.5" r="3.4" fill="#3c0f71"/>
<circle cx="217.6" cy="659.4" r="18" fill="none" stroke="#777" stroke-width="2"/>
<rect x="32.5" y="407.9" width="2.8" height="11.1" rx="1.4" fill="#2b2b2b"/>
<rect x="38.9" y="410.9" width="2.8" height="5.1" rx="1.4" fill="#2b2b2b"/>
<rect x="45.1" y="405" width="2.8" height="17.2" rx="1.4" fill="#2b2b2b"/>
<rect x="51.2" y="400.3" width="2.8" height="26.7" rx="1.4" fill="#2b2b2b"/>
<rect x="57.4" y="410" width="2.8" height="6.7" rx="1.4" fill="#2b2b2b"/>
<g transform="translate(0 0)" fill="#2b2b2b"><path d="M32.5 509.6 H59.9 V537 H32.5 Z M35 512.1 V519.4 H57.4 V512.1 Z M35 521.9 V534.5 H40.8 V530.6 L39.2 528.6 V521.9 Z M43.6 521.9 V528.6 L42.1 530.6 V534.5 H50.4 V530.6 L48.8 528.6 V521.9 Z M53.2 521.9 V528.6 L51.7 530.6 V534.5 H57.4 V521.9 Z" fill-rule="evenodd"/><circle cx="39.6" cy="515.9" r="1.35"/><circle cx="46.2" cy="515.9" r="1.35"/><circle cx="52.6" cy="515.9" r="1.35"/></g>
<g transform="translate(0 110)" fill="#2b2b2b"><path d="M32.5 509.6 H59.9 V537 H32.5 Z M35 512.1 V519.4 H57.4 V512.1 Z M35 521.9 V534.5 H40.8 V530.6 L39.2 528.6 V521.9 Z M43.6 521.9 V528.6 L42.1 530.6 V534.5 H50.4 V530.6 L48.8 528.6 V521.9 Z M53.2 521.9 V528.6 L51.7 530.6 V534.5 H57.4 V521.9 Z" fill-rule="evenodd"/><circle cx="39.6" cy="515.9" r="1.35"/><circle cx="46.2" cy="515.9" r="1.35"/><circle cx="52.6" cy="515.9" r="1.35"/></g>
</svg>
<div id="tn_0" class="t" style="left:91.97px;top:264.96px;font-size:20.34px;color:#333;font-weight:400;">Brixton Bass</div>
<div id="tr_0" class="t" style="left:100.76px;top:320.43px;font-size:20.00px;color:#555;font-weight:400;-webkit-text-stroke:0.5px #555;">R</div>
<div id="tv_0" class="t" style="left:237.35px;top:336.63px;font-size:14.17px;color:#444;font-weight:400;">Vol</div>
<div id="tn_1" class="t" style="left:92.00px;top:376.01px;font-size:19.49px;color:#333;font-weight:400;">SFX - Swish - Su...</div>
<div id="tr_1" class="t" style="left:100.76px;top:430.43px;font-size:20.00px;color:#555;font-weight:400;-webkit-text-stroke:0.5px #555;">R</div>
<div id="tv_1" class="t" style="left:237.35px;top:446.63px;font-size:14.17px;color:#444;font-weight:400;">Vol</div>
<div id="tn_2" class="t" style="left:91.92px;top:484.28px;font-size:21.23px;color:#333;font-weight:400;">Bright Synth</div>
<div id="tr_2" class="t" style="left:100.76px;top:540.43px;font-size:20.00px;color:#555;font-weight:400;-webkit-text-stroke:0.5px #555;">R</div>
<div id="tv_2" class="t" style="left:237.35px;top:556.63px;font-size:14.17px;color:#444;font-weight:400;">Vol</div>
<div id="tn_3" class="t" style="left:91.96px;top:594.84px;font-size:21.27px;color:#333;font-weight:400;">Chicago Chord</div>
<div id="t808" class="t" style="left:32.16px;top:296.45px;font-size:16.95px;color:#2b2b2b;font-weight:700;">808</div>
<svg width="2048" height="660" viewBox="0 0 2048 660">
<defs><filter id="fsh" x="-30%" y="-30%" width="160%" height="160%"><feDropShadow dx="0" dy="2" stdDeviation="2.5" flood-color="#000" flood-opacity="0.28"/></filter></defs>
<circle cx="1994.8" cy="192.2" r="37.6" fill="#3c0f71" stroke="#4b1c99" stroke-width="1" filter="url(#fsh)"/>
<circle cx="1994.8" cy="284.8" r="37.6" fill="#3c0f71" stroke="#4b1c99" stroke-width="1" filter="url(#fsh)"/>
<circle cx="1994.8" cy="377.5" r="37.6" fill="#3c0f71" stroke="#4b1c99" stroke-width="1" filter="url(#fsh)"/>
<g fill="none" stroke="#fff" stroke-width="3.2" stroke-linecap="round" stroke-linejoin="round"><circle cx="1984.1" cy="200.4" r="4.6"/><circle cx="2002.2" cy="196.3" r="4.6"/><path d="M1988.7 200 V180.3 L2006.8 175.8 V196"/></g>
<g fill="none" stroke="#fff" stroke-width="3" stroke-linecap="round" stroke-linejoin="round"><path d="M1979.4 295.4 Q1980.6 289.8 1984.6 286.6 A8.2 8.2 0 1 1 1994.2 286.6 Q1998.2 289.8 1999.5 295.4"/><path d="M2001 271.6 A7.9 7.9 0 0 1 2003.8 286.6 Q2008.8 289.8 2010.4 295.4"/></g>
<path d="M1995 365.6 C1985 365.6 1977.8 370.5 1977.8 377 C1977.8 380 1979.3 382.4 1981.3 384 L1980.8 390.2 L1987 387.3 C1989 387.8 1991.5 388 1994 388 C2002 388 2007.6 383 2007.6 376.5 M2000.3 366.1 H2011.9 M2005.4 359.4 V371" fill="none" stroke="#fff" stroke-width="3" stroke-linecap="round" stroke-linejoin="round"/>
</svg>
<div class="a" style="left:0;top:618px;width:2048px;height:24px;background:linear-gradient(rgba(0,0,0,0),rgba(0,0,0,0.045))"></div>
<div class="a" style="left:0;top:642px;width:2048px;height:317px;background:#fcfcfc"></div>
<svg width="2048" height="1431" viewBox="0 0 2048 1431">
<rect x="981.3" y="662.2" width="85.4" height="6.7" rx="3.35" fill="#d2d2d2"/>
<path d="M27.5 669.5 L47.6 689.2 M47.6 669.5 L27.5 689.2" stroke="#5f5f5f" stroke-width="2.6" stroke-linecap="round"/>
<rect x="106" y="737" width="426.5" height="83.5" rx="6" fill="#fcfcfc" stroke="#d2d2d2" stroke-width="1.6"/>
<path d="M142.8 769.5 L131.5 778.6 L142.8 787.7 M494.8 769.5 L506.2 778.6 L494.8 787.7" fill="none" stroke="#666" stroke-width="2.2" stroke-linecap="round" stroke-linejoin="round"/>
<path d="M184.9 779.2 V785.6 M184.9 782.4 H197 C201.3 782.4 201.6 789 197 789 C193 789 190.6 786 190.6 782 C190.6 778 193 775.8 197 775.8 H200.9 L209.4 768.3 V782.6 L200.9 775.8" fill="none" stroke="#2b2b2b" stroke-width="2.7" stroke-linecap="round" stroke-linejoin="round"/>
<circle cx="1052.2" cy="769.3" r="40.2" fill="none" stroke="#d7d7d7" stroke-width="8.2"/>
<path d="M1088.05 775.62 A36.4 36.4 0 0 1 1016.35 775.62" fill="none" stroke="rgba(0,0,0,0.10)" stroke-width="1.6"/>
<path d="M1023.77 797.73 A40.2 40.2 0 0 1 1052.20 729.10" fill="none" stroke="#3c0f71" stroke-width="8.2"/>
<line x1="1052.20" y1="759.30" x2="1052.20" y2="725.00" stroke="#3c0f71" stroke-width="3.3"/>
<circle cx="1213.2" cy="769.3" r="40.2" fill="none" stroke="#d7d7d7" stroke-width="8.2"/>
<path d="M1249.05 775.62 A36.4 36.4 0 0 1 1177.35 775.62" fill="none" stroke="rgba(0,0,0,0.10)" stroke-width="1.6"/>
<path d="M1184.77 797.73 A40.2 40.2 0 0 1 1213.20 729.10" fill="none" stroke="#3c0f71" stroke-width="8.2"/>
<line x1="1213.20" y1="759.30" x2="1213.20" y2="725.00" stroke="#3c0f71" stroke-width="3.3"/>
<circle cx="1374.4" cy="769.3" r="40.2" fill="none" stroke="#d7d7d7" stroke-width="8.2"/>
<path d="M1410.25 775.62 A36.4 36.4 0 0 1 1338.55 775.62" fill="none" stroke="rgba(0,0,0,0.10)" stroke-width="1.6"/>
<path d="M1345.97 797.73 A40.2 40.2 0 0 1 1389.13 731.90" fill="none" stroke="#3c0f71" stroke-width="8.2"/>
<line x1="1378.07" y1="760.00" x2="1390.64" y2="728.08" stroke="#3c0f71" stroke-width="3.3"/>
<circle cx="1535.4" cy="769.3" r="40.2" fill="none" stroke="#d7d7d7" stroke-width="8.2"/>
<path d="M1571.25 775.62 A36.4 36.4 0 0 1 1499.55 775.62" fill="none" stroke="rgba(0,0,0,0.10)" stroke-width="1.6"/>
<path d="M1506.97 797.73 A40.2 40.2 0 0 1 1535.40 729.10" fill="none" stroke="#3c0f71" stroke-width="8.2"/>
<line x1="1535.40" y1="759.30" x2="1535.40" y2="725.00" stroke="#3c0f71" stroke-width="3.3"/>
<circle cx="1696.6" cy="769.3" r="40.2" fill="none" stroke="#d7d7d7" stroke-width="8.2"/>
<path d="M1732.45 775.62 A36.4 36.4 0 0 1 1660.75 775.62" fill="none" stroke="rgba(0,0,0,0.10)" stroke-width="1.6"/>
<path d="M1668.17 797.73 A40.2 40.2 0 1 1 1735.14 757.88" fill="none" stroke="#3c0f71" stroke-width="8.2"/>
<line x1="1706.19" y1="766.46" x2="1739.08" y2="756.72" stroke="#3c0f71" stroke-width="3.3"/>
<rect x="24.8" y="886.2" width="117.8" height="42.6" rx="21.3" fill="none" stroke="#7a7a7a" stroke-width="1.6"/>
<path d="M199.8 901.2 L187 912.6 L199.8 924 M318.2 901.2 L331 912.6 L318.2 924" fill="none" stroke="#777" stroke-width="2.8" stroke-linecap="round" stroke-linejoin="round"/>
<rect x="1692.2" y="886.6" width="152.6" height="42.4" rx="21.2" fill="none" stroke="#7a7a7a" stroke-width="1.6"/>
<rect x="1864" y="886.6" width="159" height="42.4" rx="21.2" fill="none" stroke="#7a7a7a" stroke-width="1.6"/>
</svg>
<div id="ins_1" class="t" style="left:243.95px;top:754.86px;font-size:21.09px;color:#2b2b2b;font-weight:700;">String Ensemble</div>
<div id="ins_2" class="t" style="left:242.89px;top:785.77px;font-size:22.25px;color:#333;font-weight:400;">String Ensemble - St...</div>
<div id="kn_Bass" class="t" style="left:1029.04px;top:820.08px;font-size:19.27px;color:#444;font-weight:400;">Bass</div>
<div id="kn_Treble" class="t" style="left:1183.02px;top:820.05px;font-size:20.79px;color:#444;font-weight:400;">Treble</div>
<div id="kn_Reverb" class="t" style="left:1340.96px;top:820.08px;font-size:20.17px;color:#444;font-weight:400;">Reverb</div>
<div id="kn_Pan" class="t" style="left:1516.97px;top:819.08px;font-size:20.14px;color:#444;font-weight:400;">Pan</div>
<div id="kn_Volume" class="t" style="left:1662.05px;top:820.17px;font-size:20.56px;color:#444;font-weight:400;">Volume</div>
<div id="p_sustain" class="t" style="left:48.97px;top:898.94px;font-size:20.67px;color:#333;font-weight:400;">Sustain</div>
<div id="p_octave" class="t" style="left:224.98px;top:898.98px;font-size:20.17px;color:#2b2b2b;font-weight:700;">Octave</div>
<div id="p_effects" class="t" style="left:1734.98px;top:898.99px;font-size:20.19px;color:#333;font-weight:700;">Effects</div>
<div id="p_savepre" class="t" style="left:1889.01px;top:899.10px;font-size:19.17px;color:#333;font-weight:700;">Save Preset</div>
<svg width="2048" height="1431" viewBox="0 0 2048 1431">
<rect x="0" y="959" width="2048" height="436" fill="#c5c6c8"/>
<rect x="0" y="1394.6" width="2048" height="2" fill="#ececec"/>
<rect x="-18.25" y="963" width="131.50" height="427.5" rx="6" fill="#fefefe"/>
<rect x="116.75" y="963" width="113.12" height="427.5" rx="6" fill="#fefefe"/>
<rect x="233.37" y="963" width="113.12" height="427.5" rx="6" fill="#fefefe"/>
<rect x="349.99" y="963" width="113.12" height="427.5" rx="6" fill="#fefefe"/>
<rect x="466.61" y="963" width="113.12" height="427.5" rx="6" fill="#fefefe"/>
<rect x="583.23" y="963" width="113.12" height="427.5" rx="6" fill="#fefefe"/>
<rect x="699.85" y="963" width="113.12" height="427.5" rx="6" fill="#fefefe"/>
<rect x="816.47" y="963" width="113.12" height="427.5" rx="6" fill="#fefefe"/>
<rect x="933.09" y="963" width="113.12" height="427.5" rx="6" fill="#fefefe"/>
<rect x="1049.71" y="963" width="113.12" height="427.5" rx="6" fill="#fefefe"/>
<rect x="1166.33" y="963" width="113.12" height="427.5" rx="6" fill="#fefefe"/>
<rect x="1282.95" y="963" width="113.12" height="427.5" rx="6" fill="#fefefe"/>
<rect x="1399.57" y="963" width="113.12" height="427.5" rx="6" fill="#fefefe"/>
<rect x="1516.19" y="963" width="113.12" height="427.5" rx="6" fill="#fefefe"/>
<rect x="1632.81" y="963" width="113.12" height="427.5" rx="6" fill="#fefefe"/>
<rect x="1749.43" y="963" width="113.12" height="427.5" rx="6" fill="#fefefe"/>
<rect x="1866.05" y="963" width="113.12" height="427.5" rx="6" fill="#fefefe"/>
<rect x="1982.67" y="963" width="113.12" height="427.5" rx="6" fill="#fefefe"/>
<defs><linearGradient id="bk" x1="0" y1="0" x2="0" y2="1"><stop offset="0" stop-color="#2d2d2d"/><stop offset="0.12" stop-color="#2f2f2f"/><stop offset="1" stop-color="#525252"/></linearGradient></defs>
<path d="M79.20 963 H147.20 V1198.8 A14 14 0 0 1 133.20 1212.8 H93.20 A14 14 0 0 1 79.20 1198.8 Z" fill="#2d2d2d"/>
<path d="M91.00 982 H135.40 V1155 A8 8 0 0 1 127.40 1163 H99.00 A8 8 0 0 1 91.00 1155 Z" fill="url(#bk)"/>
<path d="M195.82 963 H263.82 V1198.8 A14 14 0 0 1 249.82 1212.8 H209.82 A14 14 0 0 1 195.82 1198.8 Z" fill="#2d2d2d"/>
<path d="M207.62 982 H252.02 V1155 A8 8 0 0 1 244.02 1163 H215.62 A8 8 0 0 1 207.62 1155 Z" fill="url(#bk)"/>
<path d="M429.06 963 H497.06 V1198.8 A14 14 0 0 1 483.06 1212.8 H443.06 A14 14 0 0 1 429.06 1198.8 Z" fill="#2d2d2d"/>
<path d="M440.86 982 H485.26 V1155 A8 8 0 0 1 477.26 1163 H448.86 A8 8 0 0 1 440.86 1155 Z" fill="url(#bk)"/>
<path d="M545.68 963 H613.68 V1198.8 A14 14 0 0 1 599.68 1212.8 H559.68 A14 14 0 0 1 545.68 1198.8 Z" fill="#2d2d2d"/>
<path d="M557.48 982 H601.88 V1155 A8 8 0 0 1 593.88 1163 H565.48 A8 8 0 0 1 557.48 1155 Z" fill="url(#bk)"/>
<path d="M662.30 963 H730.30 V1198.8 A14 14 0 0 1 716.30 1212.8 H676.30 A14 14 0 0 1 662.30 1198.8 Z" fill="#2d2d2d"/>
<path d="M674.10 982 H718.50 V1155 A8 8 0 0 1 710.50 1163 H682.10 A8 8 0 0 1 674.10 1155 Z" fill="url(#bk)"/>
<path d="M895.54 963 H963.54 V1198.8 A14 14 0 0 1 949.54 1212.8 H909.54 A14 14 0 0 1 895.54 1198.8 Z" fill="#2d2d2d"/>
<path d="M907.34 982 H951.74 V1155 A8 8 0 0 1 943.74 1163 H915.34 A8 8 0 0 1 907.34 1155 Z" fill="url(#bk)"/>
<path d="M1012.16 963 H1080.16 V1198.8 A14 14 0 0 1 1066.16 1212.8 H1026.16 A14 14 0 0 1 1012.16 1198.8 Z" fill="#2d2d2d"/>
<path d="M1023.96 982 H1068.36 V1155 A8 8 0 0 1 1060.36 1163 H1031.96 A8 8 0 0 1 1023.96 1155 Z" fill="url(#bk)"/>
<path d="M1245.40 963 H1313.40 V1198.8 A14 14 0 0 1 1299.40 1212.8 H1259.40 A14 14 0 0 1 1245.40 1198.8 Z" fill="#2d2d2d"/>
<path d="M1257.20 982 H1301.60 V1155 A8 8 0 0 1 1293.60 1163 H1265.20 A8 8 0 0 1 1257.20 1155 Z" fill="url(#bk)"/>
<path d="M1362.02 963 H1430.02 V1198.8 A14 14 0 0 1 1416.02 1212.8 H1376.02 A14 14 0 0 1 1362.02 1198.8 Z" fill="#2d2d2d"/>
<path d="M1373.82 982 H1418.22 V1155 A8 8 0 0 1 1410.22 1163 H1381.82 A8 8 0 0 1 1373.82 1155 Z" fill="url(#bk)"/>
<path d="M1478.64 963 H1546.64 V1198.8 A14 14 0 0 1 1532.64 1212.8 H1492.64 A14 14 0 0 1 1478.64 1198.8 Z" fill="#2d2d2d"/>
<path d="M1490.44 982 H1534.84 V1155 A8 8 0 0 1 1526.84 1163 H1498.44 A8 8 0 0 1 1490.44 1155 Z" fill="url(#bk)"/>
<path d="M1711.88 963 H1779.88 V1198.8 A14 14 0 0 1 1765.88 1212.8 H1725.88 A14 14 0 0 1 1711.88 1198.8 Z" fill="#2d2d2d"/>
<path d="M1723.68 982 H1768.08 V1155 A8 8 0 0 1 1760.08 1163 H1731.68 A8 8 0 0 1 1723.68 1155 Z" fill="url(#bk)"/>
<path d="M1828.50 963 H1896.50 V1198.8 A14 14 0 0 1 1882.50 1212.8 H1842.50 A14 14 0 0 1 1828.50 1198.8 Z" fill="#2d2d2d"/>
<path d="M1840.30 982 H1884.70 V1155 A8 8 0 0 1 1876.70 1163 H1848.30 A8 8 0 0 1 1840.30 1155 Z" fill="url(#bk)"/>
<rect x="1781.1" y="1306" width="232.6" height="78.3" rx="39.15" fill="#c8c8cc"/>
<circle cx="1835.1" cy="1345.2" r="15.6" fill="none" stroke="#54565c" stroke-width="3.2"/>
<path d="M1830 1340.5 A5.2 5.2 0 1 1 1837.2 1345.3 C1835.6 1346.2 1835.1 1347.2 1835.1 1349" fill="none" stroke="#54565c" stroke-width="3" stroke-linecap="round"/>
<circle cx="1835.1" cy="1353.6" r="1.9" fill="#54565c"/>
<rect x="0" y="1396.6" width="2048" height="35" fill="#000"/>
<rect x="754" y="1408.6" width="540" height="9.5" rx="4.75" fill="#fff"/>
</svg>
<div id="k_c3" class="t" style="left:39.72px;top:1278.13px;font-size:26.19px;color:#5a5a5a;font-weight:400;">C3</div>
<div id="k_c4" class="t" style="left:855.73px;top:1277.50px;font-size:26.59px;color:#5a5a5a;font-weight:400;">C4</div>
<div id="k_c5" class="t" style="left:1672.73px;top:1277.49px;font-size:26.56px;color:#5a5a5a;font-weight:400;">C5</div>
<div id="sup" class="t" style="left:1866.57px;top:1330.81px;font-size:28.03px;color:#54565c;font-weight:700;">Support</div>
</body></html>
